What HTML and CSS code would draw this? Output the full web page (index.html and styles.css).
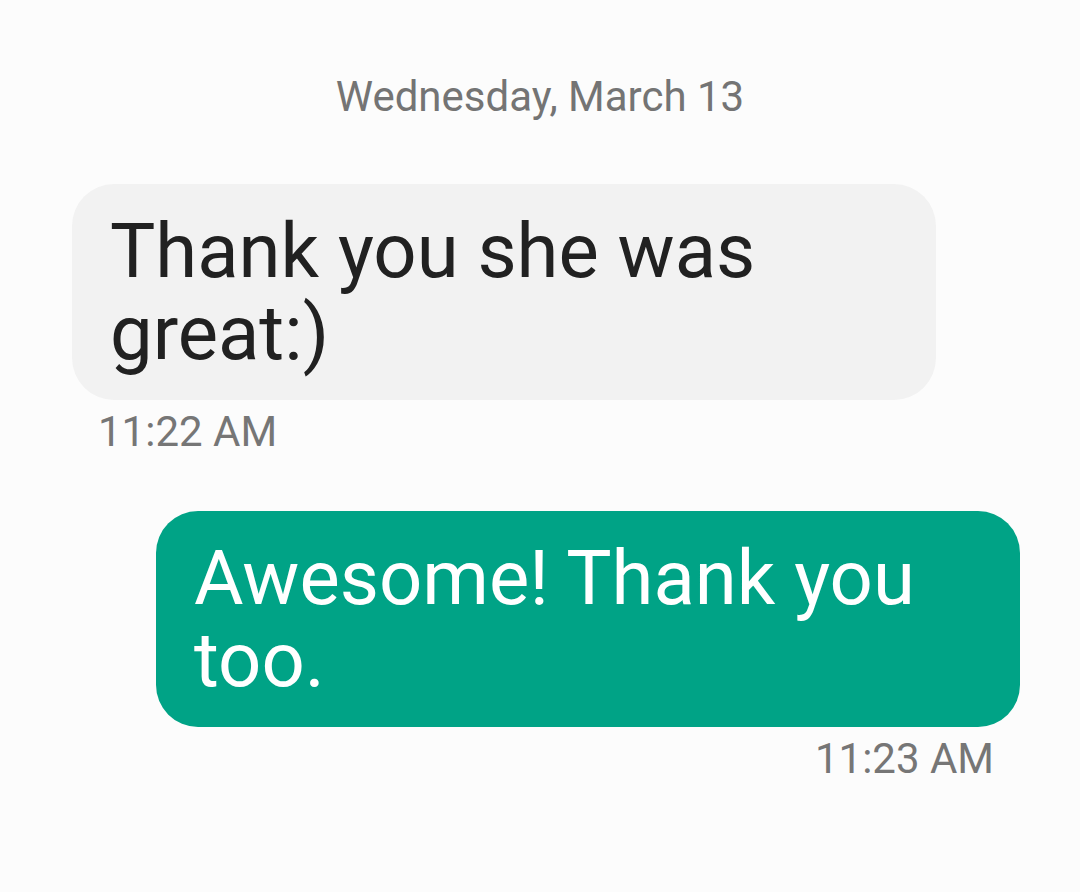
FILE: index.html
```html
<!DOCTYPE html>
<html lang="en">
<head>
    <meta charset="UTF-8">
    <meta name="viewport" content="width=device-width, initial-scale=1.0">
    <title>Messages</title>
    <link rel="stylesheet" href="styles.css">
</head>
<body>
    <div class="date">Wednesday, March 13</div>

    <div class="thread">
        <div class="msg in">
            <div class="bubble">Thank you she was great:)</div>
            <div class="time">11:22 AM</div>
        </div>

        <div class="msg out">
            <div class="bubble">Awesome! Thank you too.</div>
            <div class="time">11:23 AM</div>
        </div>
    </div>
</body>
</html>
```

FILE: styles.css
```css
body {
    font-family: Roboto, "Noto Sans", sans-serif;
    margin: 0;
    padding: 0;
    background: #fcfcfc;
}
.date {
    text-align: center;
    color: #747474;
    font-size: 42px;
    line-height: 54px;
    padding-top: 70px;
    margin-bottom: 60px;
}
.thread {
    padding: 0 60px 0 72px;
    display: flex;
    flex-direction: column;
}
.msg {
    display: flex;
    flex-direction: column;
    margin-bottom: 51px;
}
.msg.in {
    align-items: flex-start;
}
.msg.out {
    align-items: flex-end;
}
.bubble {
    width: 864px;
    box-sizing: border-box;
    padding: 26px 38px;
    border-radius: 42px;
    font-size: 76px;
    line-height: 82px;
}
.in .bubble {
    background: #f2f2f2;
    color: #212121;
}
.out .bubble {
    background: #00a386;
    color: #fff;
}
.time {
    color: #767676;
    font-size: 42px;
    line-height: 56px;
    margin: 4px 26px 0;
}
```
